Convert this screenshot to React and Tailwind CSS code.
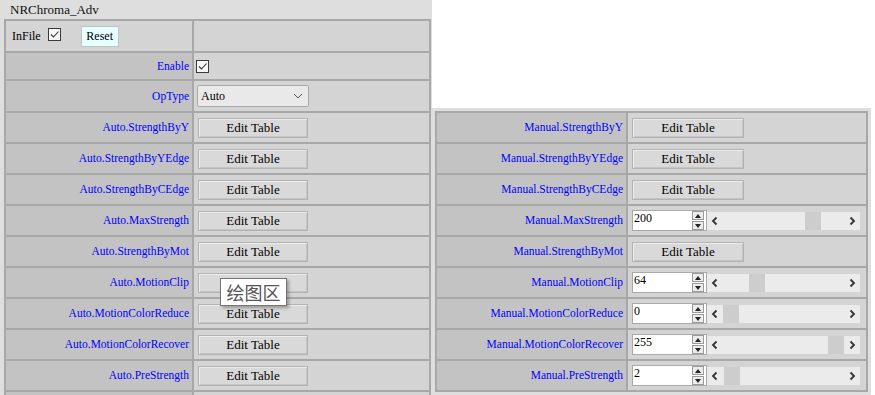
import React from 'react';

const serif = "font-['Liberation_Serif','Times_New_Roman',serif]";

const CheckBox = () => (
  <span className="inline-flex h-[13px] w-[13px] items-center justify-center border border-[#3a3a3a] bg-[#f7f7f7]">
    <svg viewBox="0 0 11 11" className="h-[11px] w-[11px]">
      <path d="M2 5.5 L4.5 8 L9.5 2.5" fill="none" stroke="#333" strokeWidth="1.1" />
    </svg>
  </span>
);

const EditButton = ({ wide }) => (
  <button
    className={`flex h-[20px] items-center justify-center border border-[#b3b3b3] bg-[#d9d9d9] text-[13px] leading-none text-black shadow-[inset_1px_1px_0_#ececec,inset_-1px_-1px_0_#c4c4c4] ${serif} ${
      wide ? 'w-[112px]' : 'w-[110px]'
    }`}
  >
    Edit Table
  </button>
);

const Chevron = ({ dir }) => (
  <svg viewBox="0 0 8 10" className="h-[10px] w-[8px]">
    <path
      d={dir === 'left' ? 'M5.5 1.5 L2 5 L5.5 8.5' : 'M2.5 1.5 L6 5 L2.5 8.5'}
      fill="none"
      stroke="#333"
      strokeWidth="1.8"
    />
  </svg>
);

const SpinHalf = ({ up }) => (
  <span className="flex h-[9px] w-[12px] items-center justify-center border border-[#9a9a9a] bg-[#ececec]">
    <svg viewBox="0 0 6 4" className="h-[4px] w-[6px]">
      <path d={up ? 'M0 4 L3 0 L6 4 Z' : 'M0 0 L3 4 L6 0 Z'} fill="#222" />
    </svg>
  </span>
);

const NumField = ({ value }) => {
  const thumb = 16 + Math.round((value / 255) * 105);
  return (
    <div className="flex items-center">
      <div className="flex h-[21px] w-[75px] items-center border border-[#a9a9a9] bg-white">
        <span className={`flex-1 self-start pl-[1px] pt-[1px] text-[12px] leading-none text-black ${serif}`}>{value}</span>
        <div className="mr-[2px] flex flex-col gap-[1px]">
          <SpinHalf up />
          <SpinHalf />
        </div>
      </div>
      <div className="relative flex h-[18px] w-[153px] items-center justify-between bg-[#ebebeb] px-[4px]">
        <Chevron dir="left" />
        <Chevron dir="right" />
        <div className="absolute top-0 h-full w-[16px] bg-[#cdcdcd]" style={{ left: thumb }} />
      </div>
    </div>
  );
};

const Label = ({ children, h = 'h-[29px]' }) => (
  <div className={`flex ${h} items-center justify-end bg-[#c3c3c3] pr-[3px] pt-[1px] text-[11.5px] text-[#0000ff] ${serif}`}>
    {children}
  </div>
);

const Value = ({ children, h = 'h-[29px]' }) => (
  <div className={`flex ${h} items-center bg-[#d4d4d4] pl-[4px]`}>{children}</div>
);

const autoRows = [
  'Auto.StrengthByY',
  'Auto.StrengthByYEdge',
  'Auto.StrengthByCEdge',
  'Auto.MaxStrength',
  'Auto.StrengthByMot',
  'Auto.MotionClip',
  'Auto.MotionColorReduce',
  'Auto.MotionColorRecover',
  'Auto.PreStrength',
];

const manualRows = [
  { name: 'Manual.StrengthByY' },
  { name: 'Manual.StrengthByYEdge' },
  { name: 'Manual.StrengthByCEdge' },
  { name: 'Manual.MaxStrength', value: 200 },
  { name: 'Manual.StrengthByMot' },
  { name: 'Manual.MotionClip', value: 64 },
  { name: 'Manual.MotionColorReduce', value: 0 },
  { name: 'Manual.MotionColorRecover', value: 255 },
  { name: 'Manual.PreStrength', value: 2 },
];

export default function App() {
  return (
    <div className={`relative flex h-[395px] w-[875px] items-start overflow-hidden bg-white ${serif}`}>
      {/* left panel */}
      <div className="flex w-[432px] shrink-0 flex-col bg-[#dedede] pl-[4px] pr-[1px]">
        <div className="flex h-[19px] shrink-0 items-center pl-[6px] text-[13px] leading-none text-[#111]">NRChroma_Adv</div>
        <div className="grid shrink-0 grid-cols-[186px_235px] gap-[2px] bg-[#a8a8a8] p-[2px]">
          <div className="flex h-[30px] items-center bg-[#d4d4d4] pl-[6px] text-[12px] text-black">
            <span>InFile</span>
            <span className="ml-[7px]">
              <CheckBox />
            </span>
            <button className="ml-[20px] flex h-[21px] w-[38px] items-center justify-center border border-[#c2c2c2] bg-[#e6ffff] text-[12px] text-black">
              Reset
            </button>
          </div>
          <div className="h-[30px] bg-[#d4d4d4]" />

          <Label h="h-[26px]">Enable</Label>
          <div className="flex h-[26px] items-center bg-[#d4d4d4] pl-[2px]">
            <CheckBox />
          </div>

          <Label h="h-[30px]">OpType</Label>
          <div className="flex h-[30px] items-center bg-[#d4d4d4] pl-[3px]">
            <div className="flex h-[22px] w-[112px] items-center justify-between rounded-[2px] border border-[#a9a9a9] bg-[#e9e9e9] pl-[3px] pr-[5px] text-[12px] text-black">
              <span>Auto</span>
              <svg viewBox="0 0 10 6" className="h-[6px] w-[10px]">
                <path d="M1 1 L5 5 L9 1" fill="none" stroke="#555" strokeWidth="1" />
              </svg>
            </div>
          </div>

          {autoRows.map((name) => (
            <React.Fragment key={name}>
              <Label>{name}</Label>
              <Value>
                <EditButton />
              </Value>
            </React.Fragment>
          ))}
          <div className="h-[29px] bg-[#c3c3c3]" />
          <div className="h-[29px] bg-[#d4d4d4]" />
        </div>
      </div>

      {/* right panel */}
      <div className="mt-[108px] w-[439px] shrink-0 bg-[#dedede] p-[3px]">
        <div className="grid grid-cols-[189px_238px] gap-[2px] bg-[#a8a8a8] p-[2px]">
          {manualRows.map((r) => (
            <React.Fragment key={r.name}>
              <Label>{r.name}</Label>
              <Value>{r.value === undefined ? <EditButton wide /> : <NumField value={r.value} />}</Value>
            </React.Fragment>
          ))}
        </div>
      </div>

      {/* tooltip */}
      <div className="absolute left-[220px] top-[278px] flex h-[28px] w-[67px] items-center justify-center border border-[#767676] bg-white text-[18px] leading-none text-[#555] shadow-[2px_2px_3px_rgba(0,0,0,0.3)] font-['Noto_Sans_CJK_SC',sans-serif]">
        绘图区
      </div>
    </div>
  );
}
